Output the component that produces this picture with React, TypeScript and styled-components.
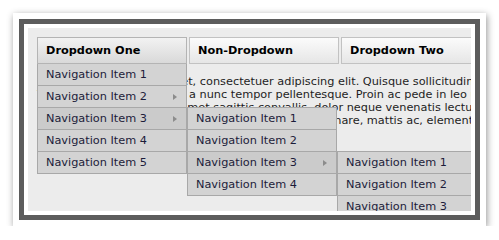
import React from 'react'
import styled, { createGlobalStyle } from 'styled-components'

type Item = {
  label: string
  active?: boolean
  children?: Item[]
}

const menu: { title: string; active?: boolean; items?: Item[] }[] = [
  {
    title: 'Dropdown One',
    active: true,
    items: [
      { label: 'Navigation Item 1' },
      { label: 'Navigation Item 2', children: [] },
      {
        label: 'Navigation Item 3',
        active: true,
        children: [
          { label: 'Navigation Item 1' },
          { label: 'Navigation Item 2' },
          {
            label: 'Navigation Item 3',
            active: true,
            children: [
              { label: 'Navigation Item 1' },
              { label: 'Navigation Item 2' },
              { label: 'Navigation Item 3' },
            ],
          },
          { label: 'Navigation Item 4' },
        ],
      },
      { label: 'Navigation Item 4' },
      { label: 'Navigation Item 5' },
    ],
  },
  { title: 'Non-Dropdown' },
  { title: 'Dropdown Two' },
]

const lines = [
  'Lorem ipsum dolor sit amet, consectetuer adipiscing elit. Quisque sollicitudin dignissim lacus.',
  'Vestibulum eget dui vel et a nunc tempor pellentesque. Proin ac pede in leo ultrices tempus.',
  'Nullam porttitor, ante sit amet sagittis convallis, dolor neque venenatis lectus, in varius.',
  'Integer dapibus lectus at orci, vitae tincidunt nula ornare, mattis ac, elementum sed, turpis.',
]

const GlobalStyle = createGlobalStyle`
  html, body {
    margin: 0;
    padding: 0;
    background: #fff;
  }
  body {
    font-family: "DejaVu Sans", Verdana, sans-serif;
  }
`

const Frame = styled.div`
  margin: 13px 0 0 13px;
  width: 461px;
  padding: 6px;
  background: #fff;
  box-shadow: 1px 2px 7px rgba(0, 0, 0, 0.42);
`

const Border = styled.div`
  border: 5px solid #5c5c5c;
  padding: 4px;
  background: #fff;
`

const Content = styled.div`
  position: relative;
  height: 183px;
  padding: 9px 0 0 9px;
  box-sizing: border-box;
  background: #ececec;
  overflow: hidden;
`

const Nav = styled.ul`
  display: flex;
  gap: 2px;
  margin: 0;
  padding: 0;
  list-style: none;
  position: relative;
  z-index: 2;
`

const NavItem = styled.li`
  position: relative;
  flex: 0 0 150px;
`

const NavHeader = styled.div<{ $active?: boolean }>`
  height: 27px;
  box-sizing: border-box;
  padding: 0 8px;
  display: flex;
  align-items: center;
  border: 1px solid ${(p) => (p.$active ? '#b4b4b4' : '#c2c2c2')};
  background: ${(p) =>
    p.$active
      ? 'linear-gradient(to bottom, #f2f2f2 0%, #d9d9d9 100%)'
      : 'linear-gradient(to bottom, #fbfbfb 0%, #e6e6e6 100%)'};
  font-size: 11.3px;
  font-weight: 700;
  color: #000;
  white-space: nowrap;
`

// dropdowns lie over the page copy, so they're absolutely placed
const Menu = styled.ul<{ $nested?: boolean }>`
  position: absolute;
  top: ${(p) => (p.$nested ? '-1px' : '100%')};
  left: ${(p) => (p.$nested ? 'calc(100% + 1px)' : '0')};
  width: 150px;
  box-sizing: border-box;
  margin: 0;
  padding: 0;
  list-style: none;
  border: 1px solid #a8a8a8;
  border-bottom: 0;
  border-top-width: ${(p) => (p.$nested ? '1px' : '0')};
  background: #d3d3d3;
`

const MenuItem = styled.li<{ $active?: boolean }>`
  position: relative;
  height: 21px;
  padding: 0 8px;
  display: flex;
  align-items: center;
  justify-content: space-between;
  border-bottom: 1px solid #a8a8a8;
  background: ${(p) => (p.$active ? '#cbcbcb' : '#d3d3d3')};
  font-size: 11.3px;
  color: #1c1c3a;
  white-space: nowrap;
`

const Arrow = styled.span`
  width: 0;
  height: 0;
  margin-right: 1px;
  border-left: 4px solid #8c8c8c;
  border-top: 3.5px solid transparent;
  border-bottom: 3.5px solid transparent;
`

const Copy = styled.div`
  margin-top: 11px;
  position: relative;
  z-index: 1;
`

const Line = styled.p`
  margin: 0;
  font-size: 11.3px;
  line-height: 13px;
  color: #1e1e1e;
  white-space: nowrap;
`

const SubMenu = ({ items, nested }: { items: Item[]; nested?: boolean }) => (
  <Menu $nested={nested}>
    {items.map((item, i) => (
      <MenuItem key={i} $active={item.active}>
        <span>{item.label}</span>
        {item.children && <Arrow />}
        {item.children && item.children.length > 0 && (
          <SubMenu items={item.children} nested />
        )}
      </MenuItem>
    ))}
  </Menu>
)

const App = () => {
  return (
    <>
      <GlobalStyle />
      <Frame>
        <Border>
          <Content>
            <Nav>
              {menu.map((m) => (
                <NavItem key={m.title}>
                  <NavHeader $active={m.active}>{m.title}</NavHeader>
                  {m.items && <SubMenu items={m.items} />}
                </NavItem>
              ))}
            </Nav>
            <Copy>
              {lines.map((l, i) => (
                <Line key={i}>{l}</Line>
              ))}
            </Copy>
          </Content>
        </Border>
      </Frame>
    </>
  )
}

export default App
